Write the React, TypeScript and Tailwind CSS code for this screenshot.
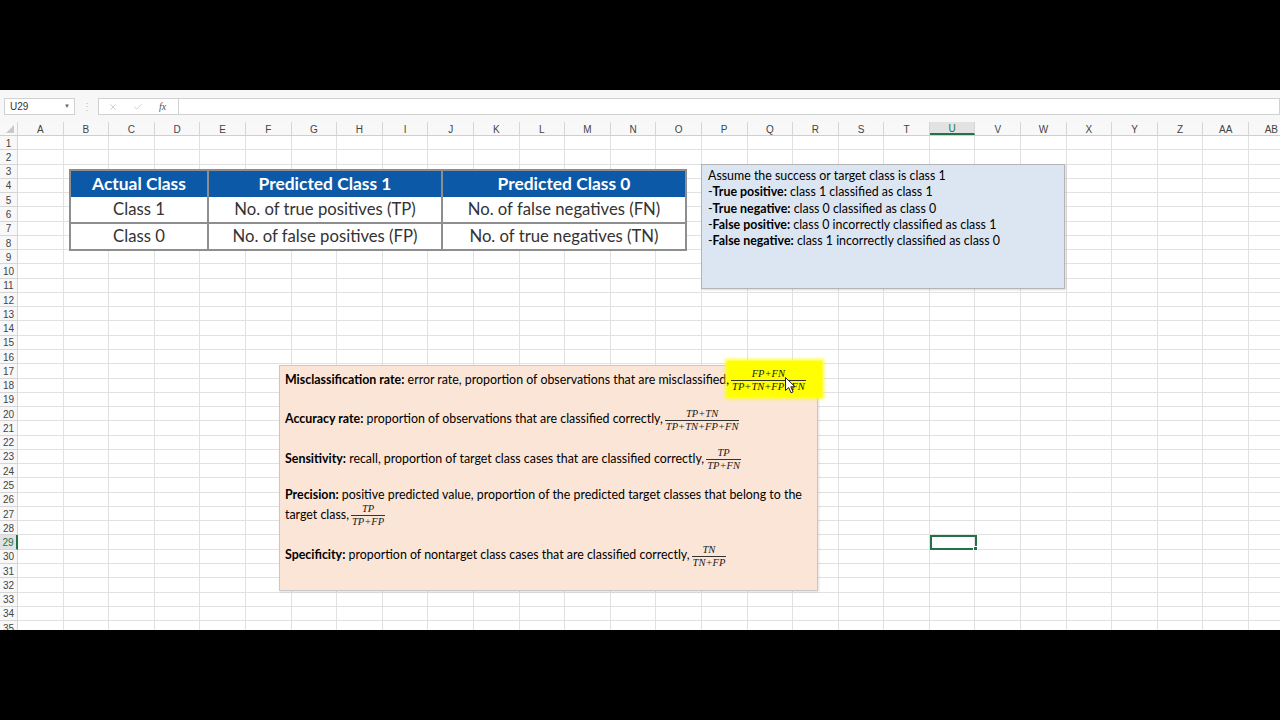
import { Check, X } from "lucide-react";

const COLS = [
  "A", "B", "C", "D", "E", "F", "G", "H", "I", "J", "K", "L", "M", "N",
  "O", "P", "Q", "R", "S", "T", "U", "V", "W", "X", "Y", "Z", "AA", "AB",
];
const ROWS = Array.from({ length: 35 }, (_, i) => i + 1);
const ACTIVE_COL = "U";
const ACTIVE_ROW = 29;

const Frac = ({ n, d, lead = "" }: { n: string; d: string; lead?: string }) => (
  <span className="relative z-20">
    {lead}
    <span className="mx-[2px] -my-[3px] inline-flex flex-col items-center align-middle font-['Liberation_Serif',serif] text-[10.5px] italic leading-[12px] text-[#1a1a1a]">
      <span className="px-[1px]">{n}</span>
      <span className="border-t border-[#333] px-[1px]">{d}</span>
    </span>
  </span>
);

const FormulaBar = () => (
  <div className="flex h-[32px] items-start bg-[#f7f7f7] pt-[8px] font-['Liberation_Sans',sans-serif] text-[10px] text-[#333]">
    <div className="ml-[4px] flex h-[17px] w-[71px] items-center justify-between border border-[#d2d2d2] bg-white pl-[5px] pr-[4px]">
      <span>U29</span>
      <span className="text-[6px] text-[#666]">▼</span>
    </div>
    <div className="flex h-[17px] w-[23px] items-center justify-center text-[10px] text-[#c0c0c0]">⋮</div>
    <div className="flex h-[17px] w-[81px] items-center border border-[#d2d2d2] bg-white">
      <X className="ml-[9px] h-[10px] w-[10px] text-[#b5b5b5]" strokeWidth={1.5} />
      <Check className="ml-[15px] h-[10px] w-[10px] text-[#b5b5b5]" strokeWidth={1.5} />
      <span className="ml-[16px] font-['Liberation_Serif',serif] text-[10px] italic text-[#555]">fx</span>
    </div>
    <div className="h-[17px] flex-1 border border-l-0 border-[#d2d2d2] bg-white" />
  </div>
);

const Grid = () => (
  <div className="font-['Liberation_Sans',sans-serif] text-[10px] text-[#444]">
    <div className="flex h-[14px] border-b border-[#cfcfcf] bg-[#f8f8f8]">
      <div className="relative w-[18px] shrink-0 border-r border-[#d6d6d6]">
        <svg className="absolute bottom-[2px] right-[3px]" width="8" height="8" viewBox="0 0 8 8">
          <path d="M8 0 L8 8 L0 8 Z" fill="#c9c9c9" />
        </svg>
      </div>
      {COLS.map((c) => (
        <div
          key={c}
          className={
            c === ACTIVE_COL
              ? "flex w-[45.6px] shrink-0 items-center justify-center border-b-2 border-r border-b-[#217346] border-r-[#d6d6d6] bg-[#e2e2e2] pt-[1px] text-[#217346]"
              : "flex w-[45.6px] shrink-0 items-center justify-center border-r border-[#d6d6d6] pt-[1px]"
          }
        >
          {c}
        </div>
      ))}
    </div>
    {ROWS.map((r) => (
      <div key={r} className="flex h-[14.27px]">
        <div
          className={
            r === ACTIVE_ROW
              ? "flex w-[18px] shrink-0 items-center justify-center border-b border-r-2 border-b-[#d6d6d6] border-r-[#217346] bg-[#e2e2e2] pt-[1px] text-[#217346]"
              : "flex w-[18px] shrink-0 items-center justify-center border-b border-r border-[#d6d6d6] bg-[#f8f8f8] pt-[1px]"
          }
        >
          {r}
        </div>
        {COLS.map((c) => (
          <div key={c} className="w-[45.6px] shrink-0 border-b border-r border-[#e1e1e1]" />
        ))}
      </div>
    ))}
  </div>
);

const ConfusionTable = () => (
  <table className="absolute left-[69px] top-[169px] w-[616px] table-fixed border-collapse border-2 border-[#8e8e8e] font-['Lato',sans-serif]">
    <colgroup>
      <col className="w-[138px]" />
      <col className="w-[234px]" />
      <col className="w-[244px]" />
    </colgroup>
    <thead>
      <tr className="h-[26px] bg-[#0c59a7] text-[17.4px] font-bold text-white">
        <th className="border-r-2 border-[#8e8e8e]">Actual Class</th>
        <th className="border-r-2 border-[#8e8e8e]">Predicted Class 1</th>
        <th>Predicted Class 0</th>
      </tr>
    </thead>
    <tbody className="bg-white text-[16.7px] text-[#333]">
      <tr className="h-[26px] border-b-2 border-[#8e8e8e]">
        <td className="border-r-2 border-[#8e8e8e] text-center">Class 1</td>
        <td className="border-r-2 border-[#8e8e8e] text-center">No. of true positives (TP)</td>
        <td className="text-center">No. of false negatives (FN)</td>
      </tr>
      <tr className="h-[26px]">
        <td className="border-r-2 border-[#8e8e8e] text-center">Class 0</td>
        <td className="border-r-2 border-[#8e8e8e] text-center">No. of false positives (FP)</td>
        <td className="text-center">No. of true negatives (TN)</td>
      </tr>
    </tbody>
  </table>
);

const DefinitionsBox = () => (
  <div className="absolute left-[701px] top-[164px] h-[125px] w-[364px] border border-[#b4b4b4] bg-[#dce6f2] pl-[6px] pt-[3px] font-['Lato',sans-serif] text-[12.4px] leading-[16.25px] text-black shadow-[1px_1px_2px_rgba(0,0,0,0.15)]">
    <div>Assume the success or target class is class 1</div>
    <div>-<b>True positive:</b> class 1 classified as class 1</div>
    <div>-<b>True negative:</b> class 0 classified as class 0</div>
    <div>-<b>False positive:</b> class 0 incorrectly classified as class 1</div>
    <div>-<b>False negative:</b> class 1 incorrectly classified as class 0</div>
  </div>
);

const MetricsBox = () => (
  <div className="absolute left-[279px] top-[365px] h-[226px] w-[539px] whitespace-nowrap border border-[#c8c8c8] bg-[#fbe5d6] pl-[5px] pt-[4px] font-['Lato',sans-serif] text-[12.4px] leading-[20px] text-black shadow-[1px_1px_2px_rgba(0,0,0,0.12)]">
    <p>
      <b>Misclassification rate:</b> error rate, proportion of observations that are misclassified
      <Frac lead="," n="FP+FN" d="TP+TN+FP+FN" />
    </p>
    <p className="mt-[19px]">
      <b>Accuracy rate:</b> proportion of observations that are classified correctly,
      <Frac n="TP+TN" d="TP+TN+FP+FN" />
    </p>
    <p className="mt-[19px]">
      <b>Sensitivity:</b> recall, proportion of target class cases that are classified correctly,
      <Frac n="TP" d="TP+FN" />
    </p>
    <p className="mt-[16px]">
      <b>Precision:</b> positive predicted value, proportion of the predicted target classes that belong to the
      <br />
      target class,
      <Frac n="TP" d="TP+FP" />
    </p>
    <p className="mt-[20px]">
      <b>Specificity:</b> proportion of nontarget class cases that are classified correctly,
      <Frac n="TN" d="TN+FP" />
    </p>
  </div>
);

export default function App() {
  return (
    <div className="relative h-[720px] w-[1280px] overflow-hidden bg-black">
      <div className="h-[90px]" />
      <div className="h-[540px] overflow-hidden bg-white">
        <FormulaBar />
        <Grid />
      </div>

      <ConfusionTable />
      <DefinitionsBox />
      <MetricsBox />

      {/* highlighter mark over the first formula */}
      <div className="absolute left-[727px] top-[361px] z-10 h-[36px] w-[95px] bg-[#ffff00] shadow-[0_0_3px_2px_rgba(255,255,0,0.85)]" />
      <svg className="absolute left-[785px] top-[377px] z-30" width="11" height="17" viewBox="0 0 11 17">
        <path d="M0.5 0.5 L0.5 13.5 L3.7 10.6 L6 15.8 L8.1 14.9 L5.8 9.8 L10 9.8 Z" fill="#fff" stroke="#222" strokeWidth="1" />
      </svg>

      {/* active cell U29 */}
      <div className="absolute left-[930px] top-[535px] h-[15px] w-[47px] border-2 border-[#217346]">
        <div className="absolute -bottom-[3px] -right-[3px] h-[5px] w-[5px] border border-white bg-[#217346]" />
      </div>
    </div>
  );
}
